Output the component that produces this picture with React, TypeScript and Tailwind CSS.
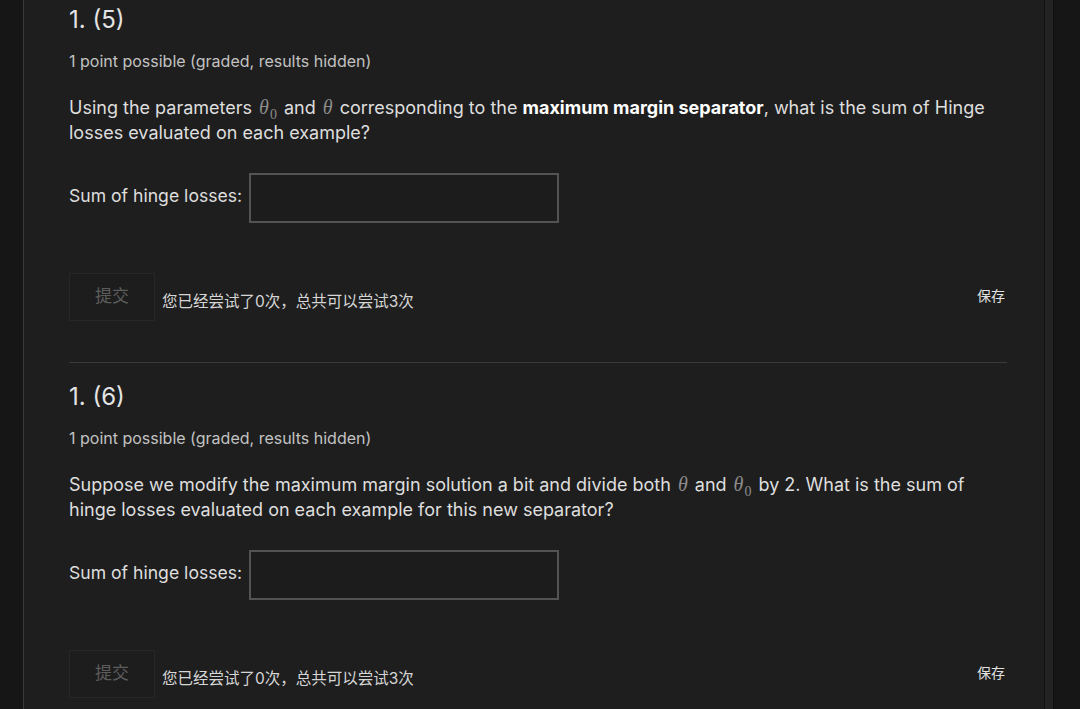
import React from "react";

const Theta = ({ sub }: { sub?: boolean }) => (
  <span
    className="italic text-[20px] leading-none text-[#8c8c8c] mx-[2px]"
    style={{ fontFamily: '"Liberation Serif", serif' }}
  >
    θ{sub && <span className="not-italic text-[14px] leading-none relative top-[5px] ml-[1px]">0</span>}
  </span>
);

function Problem({ title, children }: { title: string; children: React.ReactNode }) {
  return (
    <section>
      <h2 className="text-[24px] leading-[32px] text-[#e4e4e4] font-normal">{title}</h2>
      <p className="mt-[13px] text-[16px] leading-[24px] text-[#c2c2c2]">1 point possible (graded, results hidden)</p>
      <p className="mt-[22px] text-[18px] leading-[25px] text-[#dedede] pr-[20px]">{children}</p>
      <div className="mt-[28px] flex items-center gap-[7px]">
        <label className="text-[17.6px] text-[#dedede] -mt-[4px]">Sum of hinge losses:</label>
        <input
          type="text"
          className="w-[310px] h-[50px] bg-[#1c1c1c] border-2 border-[#535353] outline-none"
        />
      </div>
      <div className="mt-[50px] flex items-center">
        <button className="w-[86px] h-[48px] border border-[#272727] text-[17px] text-[#5c5c5c] bg-[#1d1d1d]">
          提交
        </button>
        <span className="ml-[7px] mt-[9px] text-[15.5px] text-[#d6d6d6]">
          您已经尝试了0次，总共可以尝试3次
        </span>
        <span className="ml-auto mr-[2px] -mt-[4px] text-[14px] text-[#e2e2e2]">保存</span>
      </div>
      <div className="mt-[41px] h-px bg-[#3a3a3a]" />
      <div className="h-[18px]" />
    </section>
  );
}

export default function App() {
  return (
    <div
      className="h-[709px] w-[1080px] overflow-hidden bg-[#161616] flex"
      style={{ fontFamily: 'Inter, "Noto Sans CJK SC", sans-serif' }}
    >
      <div className="w-[23px] shrink-0 bg-[#161616]" />
      <div className="w-[1031px] shrink-0 bg-[#1e1e1e] border-l border-[#3a3a3a] flex">
        <main className="w-[984px] pl-[45px] pt-[4px]">
          <div className="w-[938px]">
            <Problem title="1. (5)">
              Using the parameters <Theta sub /> and <Theta /> corresponding to the{" "}
              <b className="font-bold text-white">maximum margin separator</b>, what is the sum of Hinge
              losses evaluated on each example?
            </Problem>
            <Problem title="1. (6)">
              Suppose we modify the maximum margin solution a bit and divide both <Theta /> and <Theta sub /> by
              2. What is the sum of hinge losses evaluated on each example for this new separator?
            </Problem>
          </div>
        </main>
        <div className="flex-1" />
        <div className="w-[10px] bg-[#232323] border-l border-[#2b2b2b] border-r border-[#111111]" />
      </div>
    </div>
  );
}
